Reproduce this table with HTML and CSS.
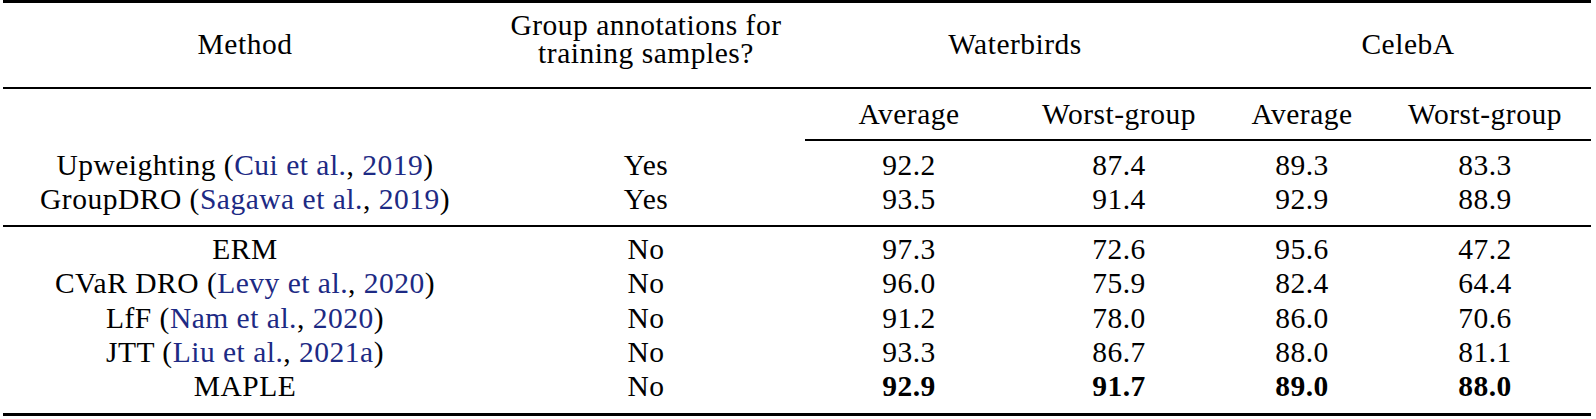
FILE: index.html
```html
<!DOCTYPE html>
<html lang="en">
<head>
<meta charset="utf-8">
<title>Results table</title>
<link rel="stylesheet" href="styles.css">
</head>
<body>
<div class="results">
  <div class="row-grid head-main">
    <div class="cell">Method</div>
    <div class="cell two-line">Group annotations for<br>training samples?</div>
    <div class="cell span2">Waterbirds</div>
    <div class="cell span2">CelebA</div>
  </div>
  <div class="row-grid head-sub">
    <div class="cell"></div>
    <div class="cell"></div>
    <div class="cell cmid">Average</div>
    <div class="cell cmid">Worst-group</div>
    <div class="cell cmid">Average</div>
    <div class="cell cmid">Worst-group</div>
  </div>
  <div class="row-grid group-a">
    <div class="cell">Upweighting (<span class="cite">Cui et al.</span>, <span class="cite">2019</span>)</div>
    <div class="cell">Yes</div><div class="cell">92.2</div><div class="cell">87.4</div><div class="cell">89.3</div><div class="cell">83.3</div>
    <div class="cell">GroupDRO (<span class="cite">Sagawa et al.</span>, <span class="cite">2019</span>)</div>
    <div class="cell">Yes</div><div class="cell">93.5</div><div class="cell">91.4</div><div class="cell">92.9</div><div class="cell">88.9</div>
  </div>
  <div class="row-grid group-b">
    <div class="cell">ERM</div>
    <div class="cell">No</div><div class="cell">97.3</div><div class="cell">72.6</div><div class="cell">95.6</div><div class="cell">47.2</div>
    <div class="cell">CVaR DRO (<span class="cite">Levy et al.</span>, <span class="cite">2020</span>)</div>
    <div class="cell">No</div><div class="cell">96.0</div><div class="cell">75.9</div><div class="cell">82.4</div><div class="cell">64.4</div>
    <div class="cell">LfF (<span class="cite">Nam et al.</span>, <span class="cite">2020</span>)</div>
    <div class="cell">No</div><div class="cell">91.2</div><div class="cell">78.0</div><div class="cell">86.0</div><div class="cell">70.6</div>
    <div class="cell">JTT (<span class="cite">Liu et al.</span>, <span class="cite">2021a</span>)</div>
    <div class="cell">No</div><div class="cell">93.3</div><div class="cell">86.7</div><div class="cell">88.0</div><div class="cell">81.1</div>
    <div class="cell">MAPLE</div>
    <div class="cell">No</div><div class="cell best">92.9</div><div class="cell best">91.7</div><div class="cell best">89.0</div><div class="cell best">88.0</div>
  </div>
</div>
</body>
</html>
```

FILE: styles.css
```css
html, body {
  margin: 0;
  padding: 0;
  background: #ffffff;
}

body {
  font-family: "Liberation Serif", serif;
  font-size: 29.5px;
  color: #000000;
}

.results {
  margin-left: 3px;
  width: 1588px;
  border-top: 3px solid #000;
  border-bottom: 3px solid #000;
}

.row-grid {
  display: grid;
  grid-template-columns: 484px 318px 208px 212px 154px 212px;
  align-items: start;
}

.cell {
  font-family: "Liberation Serif", serif;
  text-align: center;
  white-space: nowrap;
  line-height: 34px;
  letter-spacing: 0.5px;
}

.span2 {
  grid-column: span 2;
}

/* header row 1 */
.head-main {
  height: 84px;
  border-bottom: 2px solid #000;
}

.head-main .cell {
  padding-top: 24px;
}

.head-main .two-line {
  line-height: 28.3px;
  padding-top: 8px;
}

/* header row 2 */
.head-sub .cell {
  padding-top: 8px;
  padding-bottom: 8px;
  min-height: 50px;
  box-sizing: border-box;
}

.head-sub .cmid {
  border-bottom: 2px solid #000;
  min-height: 52px;
}

/* first group */
.group-a {
  padding-top: 6.5px;
  padding-bottom: 9.5px;
  border-bottom: 2px solid #000;
}

/* second group */
.group-b {
  padding-top: 5px;
  padding-bottom: 9.5px;
}

.group-b .cell {
  line-height: 34.3px;
}

.cite {
  color: #1d2a84;
}

.best {
  font-weight: bold;
}
```
